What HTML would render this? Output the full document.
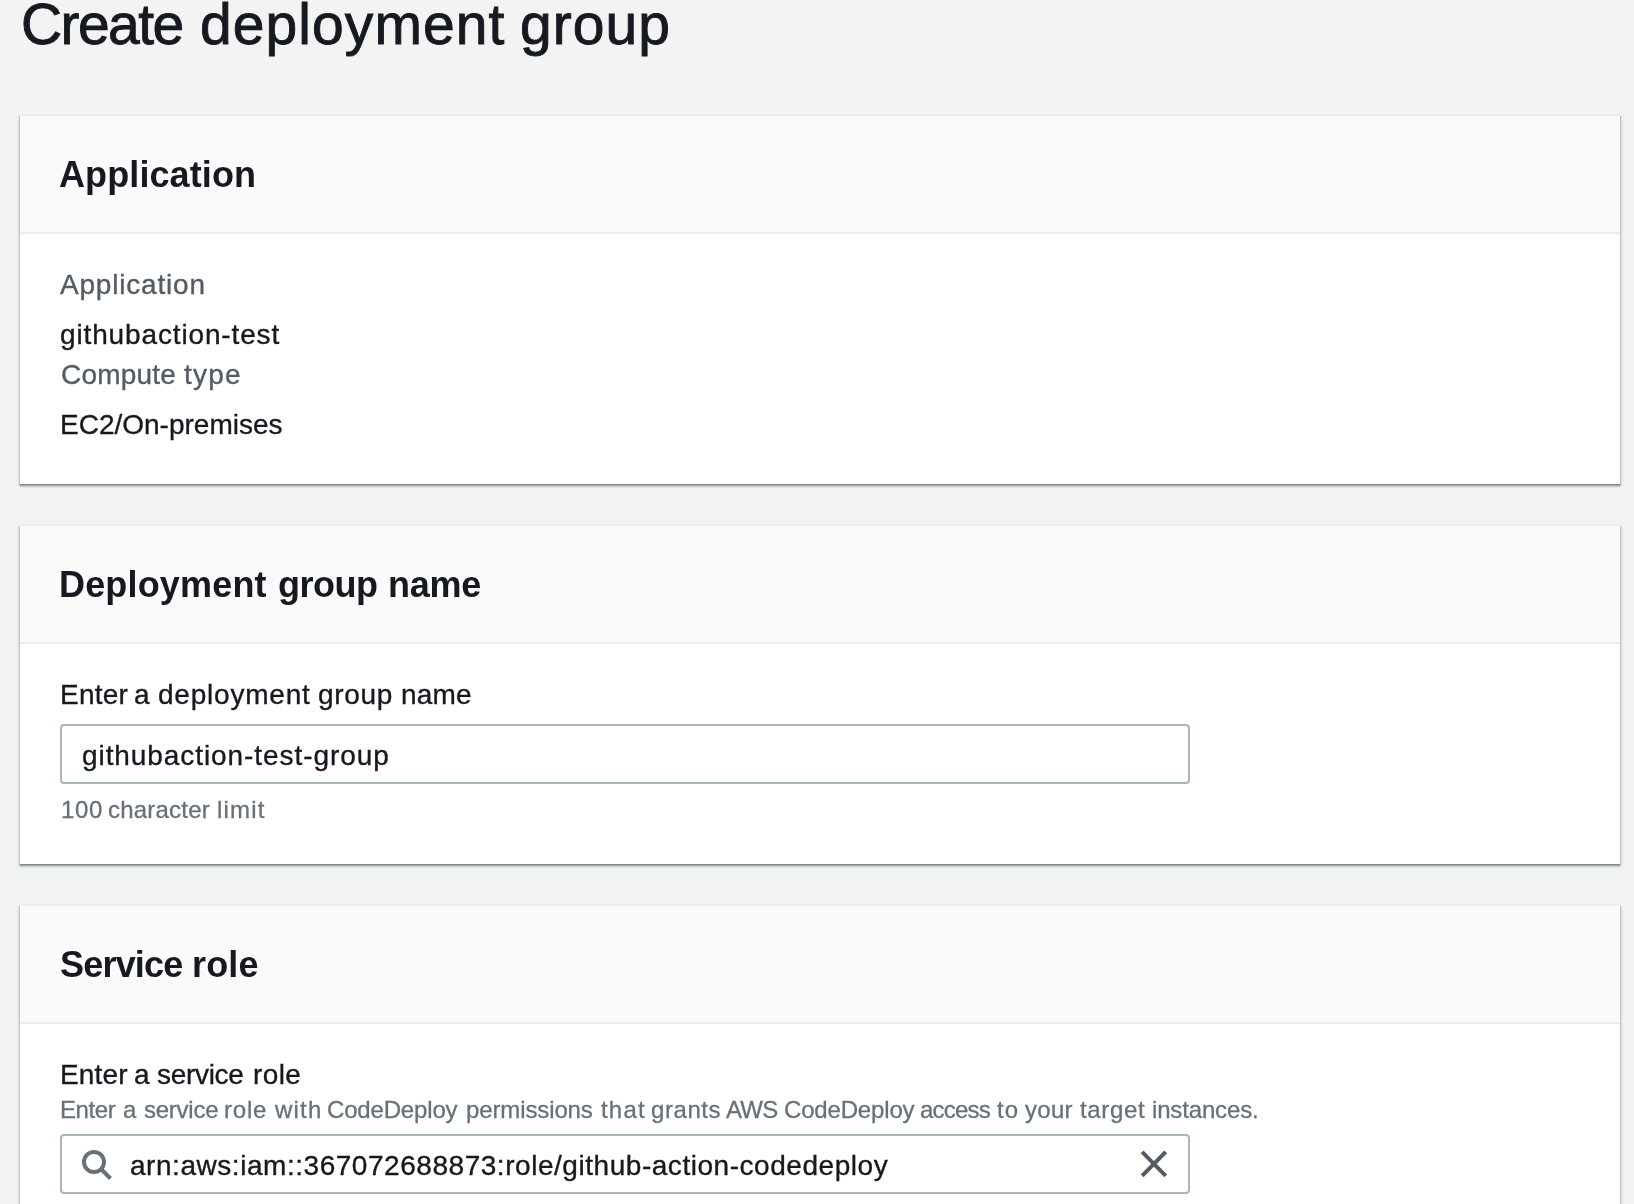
<!DOCTYPE html>
<html><head><meta charset="utf-8">
<style>
html,body{margin:0;padding:0;}
body{width:1634px;height:1204px;overflow:hidden;background:#f2f3f3;position:relative;font-family:"Liberation Sans",sans-serif;color:#16191f;}
.t{position:absolute;white-space:nowrap;line-height:1;-webkit-font-smoothing:antialiased;will-change:transform;}
.h1{font-size:57px;left:21px;top:-4px;letter-spacing:0.32px;-webkit-text-stroke:0.9px #16191f;}
.card{position:absolute;left:20px;width:1600px;background:#fff;border-top:2px solid #eaeded;box-sizing:border-box;
 }
.sl,.sr,.sb{position:absolute;}
.sl{left:-4px;top:0;width:4px;height:calc(100% + 2px);background:linear-gradient(to right,rgb(239,240,240) 0 1px,rgb(233,235,236) 1px 2px,rgb(225,228,229) 2px 3px,rgb(189,195,198) 3px 4px);}
.sr{right:-4px;top:0;width:4px;height:calc(100% + 2px);background:linear-gradient(to left,rgb(239,240,240) 0 1px,rgb(233,235,236) 1px 2px,rgb(223,227,228) 2px 3px,rgb(187,193,196) 3px 4px);}
.sb{left:0;top:100%;width:100%;height:5px;background:linear-gradient(to bottom,rgb(128,135,143) 0 1px,rgb(163,168,173) 1px 2px,rgb(205,208,211) 2px 3px,rgb(227,229,230) 3px 4px,rgb(238,240,240) 4px 5px);}
.hd{position:absolute;left:0;top:0;width:100%;height:116px;background:#fafafa;border-bottom:2px solid #eaeded;}
.h2{font-size:36px;font-weight:bold;}
.lbl{font-size:28px;color:#545b64;-webkit-text-stroke:0.35px #545b64;}
.val{font-size:28px;-webkit-text-stroke:0.35px #16191f;}
.sm{font-size:24px;color:#687078;-webkit-text-stroke:0.3px #687078;}
.inp{position:absolute;left:40px;width:1130px;height:60px;border:2px solid #aab7b8;border-radius:4px;box-sizing:border-box;background:#fff;}
</style></head><body>
<div class="t h1" style="letter-spacing:-1.6px;">Create</div><div class="t h1" style="left:200px;letter-spacing:1.08px;">deployment</div><div class="t h1" style="left:520px;letter-spacing:1.03px;">group</div>

<div class="card" style="top:114px;height:370px;">
  <div class="hd"></div><div class="sl"></div><div class="sr"></div><div class="sb"></div>
  <div class="t h2" style="left:39px;top:41px;letter-spacing:0.1px;">Application</div>
  <div class="t lbl" style="left:40px;top:155px;letter-spacing:0.8px;">Application</div>
  <div class="t val" style="left:40.3px;top:205px;letter-spacing:0.86px;">githubaction-test</div>
  <div class="t lbl" style="left:40.60px;top:245px;letter-spacing:0.200px;">Compute</div>
  <div class="t lbl" style="left:164.05px;top:245px;letter-spacing:1.200px;">type</div>
  <div class="t val" style="left:39.9px;top:295px;letter-spacing:0px;">EC2/On-premises</div>
</div>

<div class="card" style="top:524px;height:340px;">
  <div class="hd"></div><div class="sl"></div><div class="sr"></div><div class="sb"></div>
  <div class="t h2" style="left:39.40px;top:41px;letter-spacing:0.167px;">Deployment</div>
  <div class="t h2" style="left:257.70px;top:41px;letter-spacing:-0.525px;">group</div>
  <div class="t h2" style="left:367.90px;top:41px;letter-spacing:-0.233px;">name</div>
  <div class="t val" style="left:39.90px;top:155px;letter-spacing:0.200px;">Enter</div>
  <div class="t val" style="left:114.00px;top:155px;letter-spacing:0.000px;">a</div>
  <div class="t val" style="left:138.10px;top:155px;letter-spacing:0.789px;">deployment</div>
  <div class="t val" style="left:298.30px;top:155px;letter-spacing:0.675px;">group</div>
  <div class="t val" style="left:381.40px;top:155px;letter-spacing:0.167px;">name</div>
  <div class="inp" style="top:198px;"></div>
  <div class="t val" style="left:62px;top:216px;letter-spacing:0.925px;">githubaction-test-group</div>
  <div class="t sm" style="left:41.00px;top:272px;letter-spacing:0.700px;">100</div>
  <div class="t sm" style="left:88.10px;top:272px;letter-spacing:0.213px;">character</div>
  <div class="t sm" style="left:197.05px;top:272px;letter-spacing:1.200px;">limit</div>
</div>

<div class="card" style="top:904px;height:320px;">
  <div class="hd"></div><div class="sl"></div><div class="sr"></div><div class="sb"></div>
  <div class="t h2" style="left:39.60px;top:41px;letter-spacing:-0.800px;">Service</div>
  <div class="t h2" style="left:172.00px;top:41px;letter-spacing:0.133px;">role</div>
  <div class="t val" style="left:39.50px;top:155px;letter-spacing:0.175px;">Enter</div>
  <div class="t val" style="left:113.75px;top:155px;letter-spacing:0.000px;">a</div>
  <div class="t val" style="left:137.20px;top:155px;letter-spacing:-0.317px;">service</div>
  <div class="t val" style="left:232.70px;top:155px;letter-spacing:0.367px;">role</div>
  <div class="t sm" style="left:39.90px;top:192px;letter-spacing:-0.425px;">Enter</div>
  <div class="t sm" style="left:103.30px;top:192px;letter-spacing:0.000px;">a</div>
  <div class="t sm" style="left:123.50px;top:192px;letter-spacing:-0.250px;">service</div>
  <div class="t sm" style="left:204.30px;top:192px;letter-spacing:0.800px;">role</div>
  <div class="t sm" style="left:254.65px;top:192px;letter-spacing:1.200px;">with</div>
  <div class="t sm" style="left:307.20px;top:192px;letter-spacing:-0.167px;">CodeDeploy</div>
  <div class="t sm" style="left:445.90px;top:192px;letter-spacing:-0.120px;">permissions</div>
  <div class="t sm" style="left:581.15px;top:192px;letter-spacing:1.200px;">that</div>
  <div class="t sm" style="left:631.30px;top:192px;letter-spacing:0.580px;">grants</div>
  <div class="t sm" style="left:705.75px;top:192px;letter-spacing:-0.800px;">AWS</div>
  <div class="t sm" style="left:763.50px;top:192px;letter-spacing:-0.167px;">CodeDeploy</div>
  <div class="t sm" style="left:899.75px;top:192px;letter-spacing:-0.800px;">access</div>
  <div class="t sm" style="left:976.60px;top:192px;letter-spacing:1.200px;">to</div>
  <div class="t sm" style="left:1005.00px;top:192px;letter-spacing:0.267px;">your</div>
  <div class="t sm" style="left:1060.10px;top:192px;letter-spacing:0.640px;">target</div>
  <div class="t sm" style="left:1132.40px;top:192px;letter-spacing:-0.156px;">instances.</div>
  <div class="inp" style="top:228px;"></div>
  <svg style="position:absolute;left:60px;top:242px;" width="32" height="32" viewBox="0 0 32 32">
    <circle cx="14" cy="14" r="10" fill="none" stroke="#687078" stroke-width="4"/>
    <line x1="21" y1="21" x2="30.5" y2="30.5" stroke="#687078" stroke-width="4"/>
  </svg>
  <div class="t val" style="left:110px;top:246px;letter-spacing:0.54px;">arn:aws:iam::367072688873:role/github-action-codedeploy</div>
  <svg style="position:absolute;left:1118px;top:244px;" width="32" height="32" viewBox="0 0 32 32">
    <path d="M4.1 1.9 L27.7 25.9 M27.7 1.9 L4.1 25.9" fill="none" stroke="#545b64" stroke-width="4"/>
  </svg>
</div>
</body></html>
